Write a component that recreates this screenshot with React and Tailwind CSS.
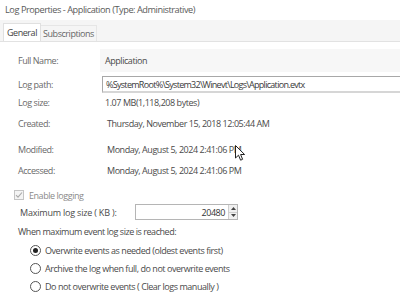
import React from 'react';

const font = { fontFamily: '"Open Sans", "Noto Sans", sans-serif' };

function Row({ h, label, children }) {
  return (
    <div className={`flex items-center ${h}`}>
      <div className="w-[100px] shrink-0 pl-[18px] text-[#6a6a6a]">{label}</div>
      <div className="flex-1 min-w-0 text-[#4a4a4a]">{children}</div>
    </div>
  );
}

function Radio({ checked, h, children }) {
  return (
    <div className={`flex items-center pl-[30px] ${h}`}>
      <span className="flex h-[11px] w-[11px] items-center justify-center rounded-full border border-[#555] bg-white">
        {checked && <span className="h-[5px] w-[5px] rounded-full bg-[#222]" />}
      </span>
      <span className="ml-[4px] text-[#4a4a4a] whitespace-nowrap">{children}</span>
    </div>
  );
}

export default function App() {
  return (
    <div className="relative h-[292px] w-[400px] overflow-hidden bg-white text-[9px] leading-none tracking-[-0.45px]" style={font}>
      {/* title */}
      <div className="flex h-[20px] items-center pl-[5px] text-[9.2px] text-[#5a5a5a]">
        Log Properties - Application (Type: Administrative)
      </div>

      {/* tab strip */}
      <div className="flex h-[22px] items-end border-b border-[#e2e2e2] bg-[#f5f5f5] pl-[3px]">
        <div className="flex h-[18px] w-[38px] items-center justify-center border border-b-0 border-[#e0e0e0] bg-white text-[#444]">
          General
        </div>
        <div className="flex h-[16px] w-[56px] items-center justify-center border border-b-0 border-l-0 border-[#e6e6e6] text-[#666]">
          Subscriptions
        </div>
      </div>

      <div className="h-[7px]" />

      <div className="flex h-[23px] items-center">
        <div className="w-[100px] shrink-0 pl-[18px] text-[#6a6a6a]">Full Name:</div>
        <div className="flex h-full flex-1 items-center bg-[#f7f7f7] pl-[5px] text-[#4a4a4a]">Application</div>
      </div>

      <div className="h-[4px]" />

      <div className="flex h-[17px] items-center">
        <div className="w-[102px] shrink-0 pl-[18px] text-[#6a6a6a]">Log path:</div>
        <div className="flex h-full flex-1 items-center border border-b-2 border-[#a8a8a8] border-b-[#d6d6d6] border-r-0 pl-[3px] tracking-[-0.7px] text-[#3a3a3a] whitespace-nowrap">
          %SystemRoot%\System32\Winevt\Logs\Application.evtx
        </div>
      </div>

      <Row h="h-[18px]" label="Log size:">
        <span className="pl-[5px]">1.07 MB(1,118,208 bytes)</span>
      </Row>
      <Row h="h-[24px]" label="Created:">
        <span className="pl-[7px]">Thursday, November 15, 2018 12:05:44 AM</span>
      </Row>
      <Row h="h-[28px]" label="Modified:">
        <span className="pl-[7px]">Monday, August 5, 2024 2:41:06 PM</span>
      </Row>
      <Row h="h-[14px]" label="Accessed:">
        <span className="pl-[7px]">Monday, August 5, 2024 2:41:06 PM</span>
      </Row>

      <div className="h-[10px]" />

      <div className="flex h-[16px] items-center pl-[14px]">
        <span className="flex h-[10px] w-[10px] items-center justify-center border border-[#c4c4c4] bg-[#f4f4f4]">
          <svg width="8" height="8" viewBox="0 0 8 8">
            <path d="M1 4.2 L3 6.2 L7 1.5" fill="none" stroke="#a9a9a9" strokeWidth="1.1" />
          </svg>
        </span>
        <span className="ml-[5px] text-[#8a8a8a]">Enable logging</span>
      </div>

      <div className="flex h-[18px] items-center">
        <div className="w-[135px] shrink-0 pl-[20px] tracking-[-0.2px] text-[#4a4a4a]">Maximum log size ( KB ):</div>
        <div className="flex h-[16px] w-[103px] items-center border border-[#b5b5b5] bg-white">
          <span className="flex-1 pr-[3px] text-right text-[#333]">20480</span>
          <span className="flex h-full w-[9px] flex-col border-l border-[#cfcfcf] bg-[#f0f0f0]">
            <span className="flex flex-1 items-center justify-center border-b border-[#cfcfcf]">
              <svg width="5" height="3" viewBox="0 0 5 3"><path d="M0 3 L2.5 0 L5 3 Z" fill="#444" /></svg>
            </span>
            <span className="flex flex-1 items-center justify-center">
              <svg width="5" height="3" viewBox="0 0 5 3"><path d="M0 0 L2.5 3 L5 0 Z" fill="#444" /></svg>
            </span>
          </span>
        </div>
      </div>

      <div className="flex h-[20px] items-center pl-[18px] text-[#4a4a4a]">
        When maximum event log size is reached:
      </div>

      <Radio checked h="h-[18px]">Overwrite events as needed (oldest events first)</Radio>
      <Radio h="h-[19px]">Archive the log when full, do not overwrite events</Radio>
      <Radio h="h-[17px]">Do not overwrite events ( Clear logs manually )</Radio>

      {/* mouse cursor */}
      <svg className="absolute left-[235px] top-[145px]" width="11" height="17" viewBox="0 0 11 17">
        <path d="M0.5 0.5 L0.5 13 L3.5 10.2 L5.6 15.2 L7.6 14.3 L5.6 9.5 L9.6 9.5 Z" fill="#fff" stroke="#222" strokeWidth="1" strokeLinejoin="round" />
      </svg>
    </div>
  );
}
